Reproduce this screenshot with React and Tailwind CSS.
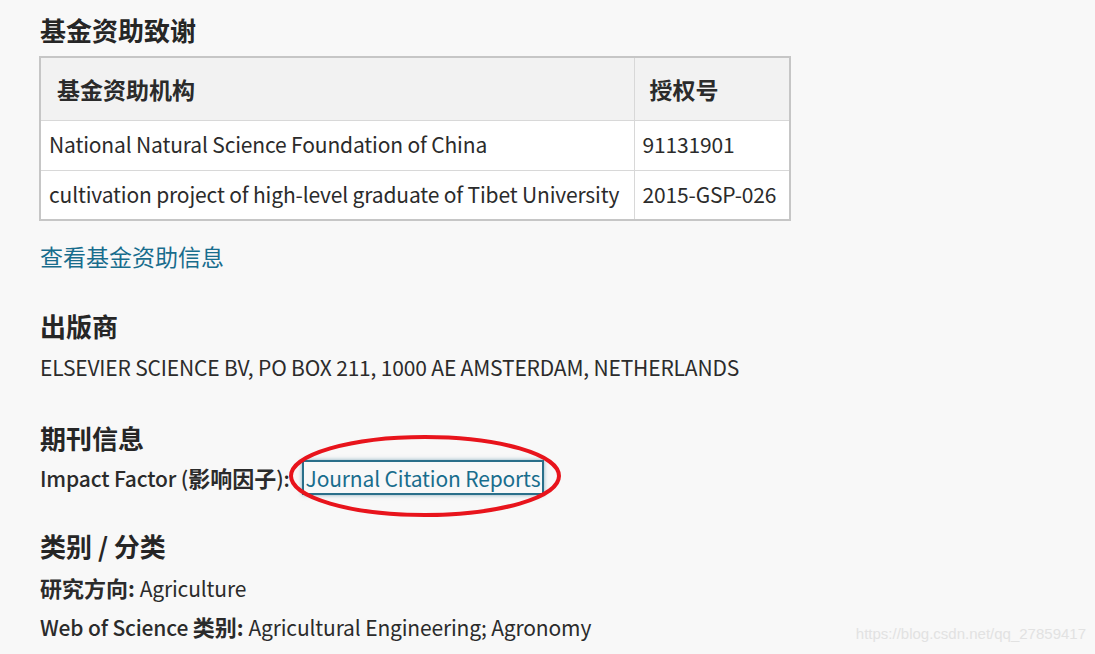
import React from "react";

const font = { fontFamily: '"Noto Sans CJK SC", "Noto Sans", sans-serif' };

function L({ children, className = "" }) {
  return <span className={"text-[21px] tracking-[-0.15px] " + className}>{children}</span>;
}

export default function App() {
  return (
    <div
      className="relative w-[1095px] h-[654px] overflow-hidden bg-[#f8f8f8] text-[#2b2b2b]"
      style={font}
    >
      <div className="pl-[40px] pt-[13px]">
        <h2 className="text-[26px] leading-[34px] font-bold text-[#262626]">基金资助致谢</h2>

        <table className="mt-[9px] ml-[-1px] w-[752px] border-2 border-[#c6c6c6] border-collapse bg-white text-[21px] tracking-[-0.15px] table-fixed">
          <thead>
            <tr className="bg-[#f2f2f2] h-[63px]">
              <th className="text-left font-bold pl-[16px] border border-[#d8d8d8] w-[594px] text-[23px] tracking-normal">基金资助机构</th>
              <th className="text-left font-bold pl-[15px] border border-[#d8d8d8] text-[23px] tracking-normal">授权号</th>
            </tr>
          </thead>
          <tbody>
            <tr className="h-[50px]">
              <td className="pl-[8px] border border-[#d8d8d8] whitespace-nowrap">National Natural Science Foundation of China</td>
              <td className="pl-[8px] border border-[#d8d8d8]">91131901</td>
            </tr>
            <tr className="h-[50px]">
              <td className="pl-[8px] border border-[#d8d8d8] whitespace-nowrap">cultivation project of high-level graduate of Tibet University</td>
              <td className="pl-[8px] border border-[#d8d8d8] whitespace-nowrap">2015-GSP-026</td>
            </tr>
          </tbody>
        </table>

        <div className="mt-[19px] text-[23px] leading-[32px] text-[#186d8d]">查看基金资助信息</div>

        <h2 className="mt-[37px] text-[26px] leading-[34px] font-bold text-[#262626]">出版商</h2>
        <div className="mt-[8px] leading-[32px]">
          <span className="text-[21px] tracking-[-0.17px]">
            ELSEVIER SCIENCE BV, PO BOX 211, 1000 AE AMSTERDAM, NETHERLANDS
          </span>
        </div>

        <h2 className="mt-[36px] text-[26px] leading-[34px] font-bold text-[#262626]">期刊信息</h2>
        <div className="mt-[6px] text-[22px] leading-[32px] flex items-center">
          <span className="font-medium">
            <L>Impact Factor (</L>
            <span className="font-bold">影响因子</span>
            <L>):</L>
          </span>
          <span className="relative ml-[14px]">
            <span className="block px-[2px] h-[31px] leading-[31px] text-[#186d8d] outline outline-2 outline-[#2a6f8a] shadow-[0_0_4px_2px_rgba(40,110,140,0.55)]">
              <L>Journal Citation Reports</L>
            </span>
            <svg
              className="absolute left-[-17px] top-[-29px] pointer-events-none"
              width="277"
              height="86"
              viewBox="0 0 277 86"
            >
              <ellipse cx="138" cy="43" rx="134" ry="39" fill="none" stroke="#e8141c" strokeWidth="4" />
            </svg>
          </span>
        </div>

        <h2 className="mt-[35px] text-[26px] leading-[34px] font-bold text-[#262626]">类别 / 分类</h2>
        <div className="mt-[8px] text-[22px] leading-[32px]">
          <span className="font-bold">研究方向<L>:</L></span> <L>Agriculture</L>
        </div>
        <div className="mt-[6px] text-[22px] leading-[32px]">
          <span className="font-medium"><L>Web of Science </L><span className="font-bold">类别<L>:</L></span></span> <L>Agricultural Engineering; Agronomy</L>
        </div>
      </div>

      <div
        className="absolute right-[9px] bottom-[9px] text-[15px] text-[#e2e2e2]"
        style={{ fontFamily: '"Liberation Sans", Arial, sans-serif' }}
      >
        https://blog.csdn.net/qq_27859417
      </div>
    </div>
  );
}
